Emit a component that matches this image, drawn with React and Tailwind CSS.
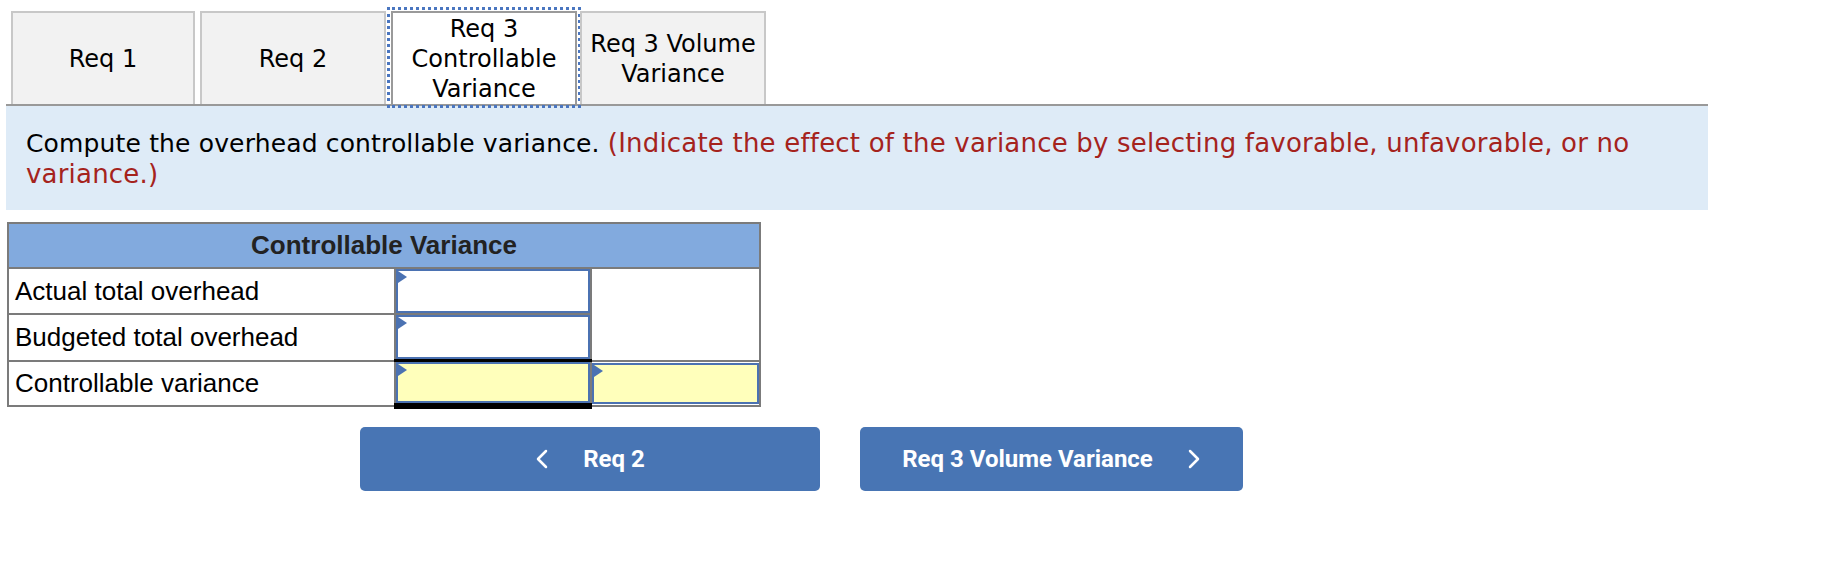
import React from "react";

const tabFont = { fontFamily: '"DejaVu Sans", Verdana, sans-serif' };

function Marker() {
  return (
    <span className="absolute left-0 top-0 h-0 w-0 border-l-[9px] border-y-[6px] border-l-[#4b72b2] border-y-transparent" />
  );
}

function InputBox({ yellow, short }) {
  return (
    <div
      className={`relative w-full border-2 border-[#4b72b2] ${short ? "h-[41px]" : "h-[44px]"} ${yellow ? "bg-[#ffffbb]" : "bg-white"}`}
    >
      <Marker />
    </div>
  );
}

function ChevronLeft() {
  return (
    <svg width="14" height="20" viewBox="0 0 14 20" fill="none">
      <polyline points="11,2 3,10 11,18" stroke="white" strokeWidth="2.5" strokeLinecap="round" strokeLinejoin="round" />
    </svg>
  );
}

function ChevronRight() {
  return (
    <svg width="14" height="20" viewBox="0 0 14 20" fill="none">
      <polyline points="3,2 11,10 3,18" stroke="white" strokeWidth="2.5" strokeLinecap="round" strokeLinejoin="round" />
    </svg>
  );
}

export default function App() {
  return (
    <div className="min-h-[568px] w-[1834px] bg-white pt-[11px]">
      <div className="ml-[6px] w-[1702px]">
        {/* Tabs */}
        <div className="flex items-end pl-[5px] text-[24px] leading-[30px] text-black" style={tabFont}>
          <div className="mr-[5px] flex h-[93px] w-[184px] items-center justify-center border-2 border-b-0 border-[#c8c8c8] bg-[#f2f2f2] text-center">
            Req 1
          </div>
          <div className="mr-[5px] flex h-[93px] w-[186px] items-center justify-center border-2 border-b-0 border-[#c8c8c8] bg-[#f2f2f2] text-center">
            Req 2
          </div>
          <div className="mr-[3px] flex h-[93px] w-[186px] items-center justify-center border-2 border-b-0 border-[#9a9a9a] bg-white px-1 text-center outline-[3px] outline-offset-[1px] outline-dotted outline-[#4a76c0]">
            Req 3 Controllable Variance
          </div>
          <div className="flex h-[93px] w-[186px] items-center justify-center border-2 border-b-0 border-[#c8c8c8] bg-[#f2f2f2] px-1 text-center">
            Req 3 Volume Variance
          </div>
        </div>

        {/* Prompt */}
        <p className="border-t-2 border-[#999999] bg-[#deebf7] px-5 pb-[20px] pt-[22px] text-[25px] leading-[31px]" style={tabFont}>
          <span className="tracking-[0.15px] text-black">Compute the overhead controllable variance. </span>
          <span className="text-[26px] tracking-[0.2px] text-[#a5231d]">
            (Indicate the effect of the variance by selecting favorable, unfavorable, or no variance.)
          </span>
        </p>
      </div>

      {/* Table */}
      <table
        className="ml-[7px] mt-[12px] border-collapse border-2 border-[#7b7b7b] text-[26px] text-black"
        style={{ fontFamily: '"Liberation Sans", Arial, sans-serif' }}
      >
        <tbody>
          <tr>
            <th colSpan={3} className="h-[45px] border-2 border-[#7b7b7b] bg-[#82aade] p-0 text-center font-bold text-[#222222]">
              Controllable Variance
            </th>
          </tr>
          <tr>
            <td className="h-[45px] w-[387px] border-2 border-[#7b7b7b] px-[6px] py-0 leading-[30px]">Actual total overhead</td>
            <td className="w-[196px] border-2 border-[#7b7b7b] p-0">
              <InputBox />
            </td>
            <td rowSpan={2} className="w-[169px] border-2 border-[#7b7b7b] bg-white p-0" />
          </tr>
          <tr>
            <td className="h-[45px] border-2 border-[#7b7b7b] px-[6px] py-0 leading-[30px]">Budgeted total overhead</td>
            <td className="border-2 border-[#7b7b7b] p-0">
              <InputBox />
            </td>
          </tr>
          <tr>
            <td className="h-[42px] border-2 border-[#7b7b7b] px-[6px] py-0 leading-[30px]">Controllable variance</td>
            <td className="border-x-2 border-t-[3px] border-b-[6px] border-x-[#7b7b7b] border-t-black border-b-black border-b-double p-0">
              <InputBox yellow short />
            </td>
            <td className="border-2 border-[#7b7b7b] p-0">
              <InputBox yellow short />
            </td>
          </tr>
        </tbody>
      </table>

      {/* Navigation */}
      <div
        className="ml-[360px] mt-[18px] flex gap-[40px] text-[24px] font-bold text-white"
        style={{ fontFamily: "Roboto, Inter, sans-serif" }}
      >
        <button className="flex h-[64px] w-[460px] items-center justify-center gap-[34px] rounded-[5px] bg-[#4875b4]">
          <ChevronLeft />
          <span>Req 2</span>
        </button>
        <button className="flex h-[64px] w-[383px] items-center justify-center gap-[34px] rounded-[5px] bg-[#4875b4]">
          <span>Req 3 Volume Variance</span>
          <ChevronRight />
        </button>
      </div>
    </div>
  );
}
